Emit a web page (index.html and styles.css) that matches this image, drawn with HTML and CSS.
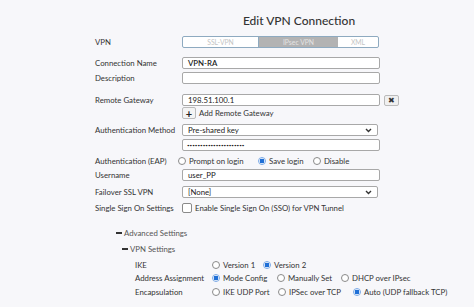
FILE: index.html
```html
<!DOCTYPE html>
<html lang="en">
<head>
  <meta charset="UTF-8">
  <title>Edit VPN Connection</title>
  <link rel="stylesheet" href="styles.css">
</head>
<body>
  <div class="page">
    <h1 class="title">Edit VPN Connection</h1>

    <div class="form">
      <div class="row row-vpn">
        <div class="label">VPN</div>
        <div class="segments">
          <span class="seg seg-ssl">SSL-VPN</span>
          <span class="seg seg-ipsec active">IPsec VPN</span>
          <span class="seg seg-xml">XML</span>
        </div>
      </div>

      <div class="row row-name">
        <div class="label">Connection Name</div>
        <div class="input">VPN-RA</div>
      </div>

      <div class="row row-desc">
        <div class="label">Description</div>
        <div class="input"></div>
      </div>

      <div class="row row-gw">
        <div class="label">Remote Gateway</div>
        <div class="input">198.51.100.1</div>
        <span class="btn-x">&#10006;</span>
      </div>

      <div class="row row-addgw">
        <div class="label"></div>
        <span class="btn-plus">+</span>
        <span class="opt-text add-text">Add Remote Gateway</span>
      </div>

      <div class="row row-auth">
        <div class="label">Authentication Method</div>
        <div class="select">
          <span>Pre-shared key</span>
          <svg class="chev" width="7" height="5" viewBox="0 0 7 5"><path d="M1 1 L3.5 3.5 L6 1" fill="none" stroke="#333" stroke-width="1.4"/></svg>
        </div>
      </div>

      <div class="row row-psk">
        <div class="label"></div>
        <div class="input dots">&#8226;&#8226;&#8226;&#8226;&#8226;&#8226;&#8226;&#8226;&#8226;&#8226;&#8226;&#8226;&#8226;&#8226;&#8226;&#8226;&#8226;&#8226;&#8226;&#8226;&#8226;&#8226;</div>
      </div>

      <div class="row row-eap">
        <div class="label">Authentication (EAP)</div>
        <div class="options eap-options">
          <span class="radio"></span><span class="opt-text w-prompt">Prompt on login</span>
          <span class="radio checked"></span><span class="opt-text w-save">Save login</span>
          <span class="radio"></span><span class="opt-text">Disable</span>
        </div>
      </div>

      <div class="row row-user">
        <div class="label">Username</div>
        <div class="input">user_PP</div>
      </div>

      <div class="row row-fail">
        <div class="label">Failover SSL VPN</div>
        <div class="select">
          <span>[None]</span>
          <svg class="chev" width="7" height="5" viewBox="0 0 7 5"><path d="M1 1 L3.5 3.5 L6 1" fill="none" stroke="#333" stroke-width="1.4"/></svg>
        </div>
      </div>

      <div class="row row-sso">
        <div class="label">Single Sign On Settings</div>
        <span class="checkbox"></span>
        <span class="opt-text">Enable Single Sign On (SSO) for VPN Tunnel</span>
      </div>

      <div class="row row-adv">
        <span class="dash"></span><span class="section">Advanced Settings</span>
      </div>

      <div class="row row-vpnset">
        <span class="dash"></span><span class="section">VPN Settings</span>
      </div>

      <div class="row row-ike sub">
        <div class="label sub-label">IKE</div>
        <div class="options">
          <span class="radio"></span><span class="opt-text w-v1">Version 1</span>
          <span class="radio checked"></span><span class="opt-text">Version 2</span>
        </div>
      </div>

      <div class="row row-addr sub">
        <div class="label sub-label">Address Assignment</div>
        <div class="options">
          <span class="radio checked"></span><span class="opt-text w-mode">Mode Config</span>
          <span class="radio"></span><span class="opt-text w-manual">Manually Set</span>
          <span class="radio"></span><span class="opt-text">DHCP over IPsec</span>
        </div>
      </div>

      <div class="row row-enc sub">
        <div class="label sub-label">Encapsulation</div>
        <div class="options">
          <span class="radio"></span><span class="opt-text w-udp">IKE UDP Port</span>
          <span class="radio"></span><span class="opt-text w-tcp">IPSec over TCP</span>
          <span class="radio checked"></span><span class="opt-text">Auto (UDP fallback TCP)</span>
        </div>
      </div>
    </div>
  </div>
</body>
</html>
```

FILE: styles.css
```css
body {
  margin: 0;
  background-color: #f7f7fa;
  font-family: Lato, "Liberation Sans", sans-serif;
  color: #333;
}
.page {
  width: 474px;
  height: 307px;
  overflow: hidden;
}
.title {
  margin: 0;
  padding-top: 13px;
  height: 16px;
  line-height: 16px;
  font-size: 12px;
  font-weight: 500;
  color: #333;
  text-align: center;
  padding-left: 124px;
}
.form {
  padding-left: 95px;
  display: flex;
  flex-direction: column;
}
.row {
  display: flex;
  align-items: center;
  height: 12px;
  font-size: 7.8px;
}
.label {
  width: 87px;
  flex: none;
  color: #333;
  white-space: nowrap;
}

/* vertical rhythm */
.row-vpn { margin-top: 7px; }
.row-name { margin-top: 9px; }
.row-desc { margin-top: 3px; }
.row-gw { margin-top: 10px; }
.row-addgw { margin-top: 1px; }
.row-auth { margin-top: 5px; }
.row-psk { margin-top: 3px; }
.row-eap { margin-top: 4px; }
.row-user { margin-top: 2px; }
.row-fail { margin-top: 5px; }
.row-sso { margin-top: 4px; }
.row-adv { margin-top: 13px; padding-left: 21px; }
.row-vpnset { margin-top: 4px; padding-left: 27px; }
.row-ike { margin-top: 4px; }
.row-addr { margin-top: 1px; }
.row-enc { margin-top: 2px; }

.sub { padding-left: 40px; }
.sub-label { width: 77px; }

/* segmented control */
.segments {
  display: flex;
  width: 195px;
  height: 10px;
  border: 1px solid #8eaac0;
  border-radius: 2px;
  background: #fff;
  overflow: hidden;
}
.seg {
  display: flex;
  align-items: center;
  justify-content: center;
  font-size: 6.8px;
  color: #c4c4c4;
  border-right: 1px solid #8eaac0;
}
.seg-ssl { width: 75px; }
.seg-ipsec { width: 79px; }
.seg-xml { flex: 1; border-right: none; }
.seg.active {
  background: #b3b3b3;
  color: #e4e4e4;
  border-right: none;
}

/* inputs */
.input, .select {
  box-sizing: border-box;
  height: 12px;
  width: 198px;
  border: 1px solid #a8a8a8;
  border-radius: 2px;
  background: #fff;
  padding-left: 5px;
  display: flex;
  align-items: center;
  font-size: 7.8px;
  color: #222;
}
.row-name .input { font-weight: 600; }
.select {
  width: 196px;
  justify-content: space-between;
  padding-right: 5px;
}
.chev { flex: none; }
.dots {
  font-size: 4.5px;
  letter-spacing: 0;
  padding-left: 4px;
}

.btn-x {
  margin-left: 4px;
  width: 15px;
  height: 11px;
  box-sizing: border-box;
  border: 1px solid #bbb;
  border-radius: 2px;
  background: #f0f0f0;
  display: flex;
  align-items: center;
  justify-content: center;
  font-size: 8px;
  color: #333;
}
.btn-plus {
  width: 14px;
  height: 12px;
  box-sizing: border-box;
  border: 1px solid #bbb;
  border-radius: 2px;
  background: #f4f4f4;
  display: flex;
  align-items: center;
  justify-content: center;
  font-size: 11px;
  font-weight: 700;
  color: #222;
  line-height: 1;
}
.add-text { margin-left: 2px; }

/* options */
.options {
  display: flex;
  align-items: center;
}
.eap-options { margin-left: -4px; }
.opt-text {
  color: #333;
  white-space: nowrap;
  margin-left: 3px;
}
.w-prompt { width: 67px; }
.w-save { width: 42px; }
.w-v1 { width: 38px; }
.w-mode { width: 52px; }
.w-udp { width: 53px; }
.w-manual { width: 51px; }
.w-tcp { width: 62px; }
.radio {
  flex: none;
  width: 8px;
  height: 8px;
  box-sizing: border-box;
  border: 1px solid #8a8a8a;
  border-radius: 50%;
  background: #fff;
  margin-left: 2px;
}
.radio:first-child { margin-left: 0; }
.radio.checked {
  border-color: #7aa9e6;
  background: radial-gradient(circle, #1f6fd6 0 2.2px, #fff 2.6px);
}
.checkbox {
  width: 10px;
  height: 10px;
  box-sizing: border-box;
  border: 1px solid #8a8a8a;
  border-radius: 2px;
  background: #fff;
}
.row-sso .opt-text { margin-left: 3px; }

/* collapsible sections */
.dash {
  width: 6px;
  height: 2px;
  background: #333;
  margin-right: 2px;
}
.section {
  color: #555;
}
```
